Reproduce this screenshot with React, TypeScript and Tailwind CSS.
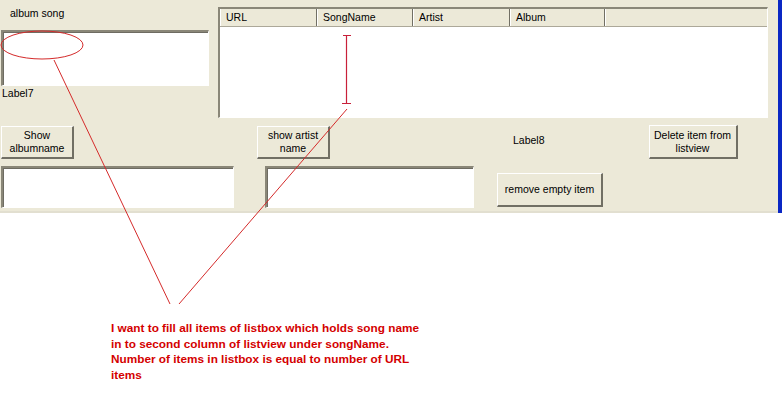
import React from "react";

const sunken =
    "bg-white border-t-2 border-l-2 border-t-[#8a8778] border-l-[#8a8778] border-b border-r border-b-white border-r-white shadow-[inset_1px_1px_0_#6e6c62]";
const raised =
    "bg-[#ECE9D8] border-t border-l border-t-white border-l-white border-b-2 border-r-2 border-b-[#716F64] border-r-[#716F64] text-[10.5px] leading-[13px] text-black text-center flex items-center justify-center";

function Button({label, className}: {label: React.ReactNode; className: string}) {
    return <div className={`${raised} ${className}`}>{label}</div>;
}

const columns = [
    {name: "URL", w: "w-[97px]"},
    {name: "SongName", w: "w-[96px]"},
    {name: "Artist", w: "w-[97px]"},
    {name: "Album", w: "w-[95px]"},
];

function ListView() {
    return (
        <div className={`${sunken} ml-[9px] mt-[7px] w-[550px] h-[111px] flex flex-col`}>
            <div className="flex h-[18px] bg-[#ECE9D8] border-b border-b-[#aca899]">
                {columns.map((c) => (
                    <div
                        key={c.name}
                        className={`${c.w} h-full pl-[6px] border-r border-r-[#716F64] shadow-[inset_1px_0_0_#fff] text-[10.5px] leading-[17px]`}
                    >
                        {c.name}
                    </div>
                ))}
                <div className="flex-1 h-full shadow-[inset_1px_0_0_#fff]"/>
            </div>
            <div className="flex-1 bg-white"/>
        </div>
    );
}

function Annotations() {
    return (
        <svg className="absolute left-0 top-0 pointer-events-none" width="782" height="401">
            <ellipse cx="42" cy="45" rx="41" ry="14" fill="none" stroke="#d42a2a" strokeWidth="1"/>
            <line x1="54" y1="60" x2="170" y2="304" stroke="#d42a2a" strokeWidth="1"/>
            <line x1="346.5" y1="35" x2="346.5" y2="103" stroke="#c8203a" strokeWidth="1.2"/>
            <line x1="343" y1="35.5" x2="351" y2="35.5" stroke="#c8203a" strokeWidth="1"/>
            <line x1="342" y1="103.5" x2="351" y2="103.5" stroke="#c8203a" strokeWidth="1"/>
            <line x1="347" y1="109" x2="179" y2="304" stroke="#d42a2a" strokeWidth="1"/>
        </svg>
    );
}

export default function App() {
    return (
        <div className="relative w-[782px] h-[401px] bg-white overflow-hidden font-['Liberation_Sans',Arial,sans-serif] text-black">
            <div className="flex w-[782px] h-[213px]">
                <div className="w-[778px] h-full bg-[#ECE9D8] border-b-2 border-b-[#e2dfd0] flex flex-col">
                    <div className="flex">
                        <div className="w-[209px] flex flex-col">
                            <div className="pl-[10px] pt-[7px] h-[30px] text-[10.5px] leading-[13px]">album song</div>
                            <div className={`${sunken} w-[208px] h-[56px] ml-[1px]`}/>
                            <div className="pl-[2px] pt-[1px] text-[10.5px] leading-[13px]">Label7</div>
                        </div>
                        <ListView/>
                    </div>
                    <div className="flex items-start mt-[7px]">
                        <Button className="ml-[1px] w-[73px] h-[33px] mt-[1px]" label={<>Show<br/>albumname</>}/>
                        <Button className="ml-[183px] w-[73px] h-[33px] mt-[1px]" label={<>show artist<br/>name</>}/>
                        <div className="ml-[183px] mt-[9px] text-[10.5px] leading-[13px]">Label8</div>
                        <Button className="ml-[104px] w-[89px] h-[34px]" label={<>Delete item from<br/>listview</>}/>
                    </div>
                    <div className="flex items-start mt-[7px]">
                        <div className={`${sunken} ml-[1px] w-[233px] h-[42px]`}/>
                        <div className={`${sunken} ml-[31px] w-[209px] h-[42px]`}/>
                        <Button className="ml-[23px] mt-[7px] w-[106px] h-[34px]" label="remove empty item"/>
                    </div>
                </div>
                <div className="w-[4px] h-full bg-[#0a27c4]"/>
            </div>
            <div className="pl-[111px] pt-[108px] text-[11.8px] leading-[15.5px] font-bold text-[#d40000]">
                I want to fill all items of listbox which holds song name<br/>
                in to second column of listview under songName.<br/>
                Number of items in listbox is equal to number of URL<br/>
                items
            </div>
            <Annotations/>
        </div>
    );
}
